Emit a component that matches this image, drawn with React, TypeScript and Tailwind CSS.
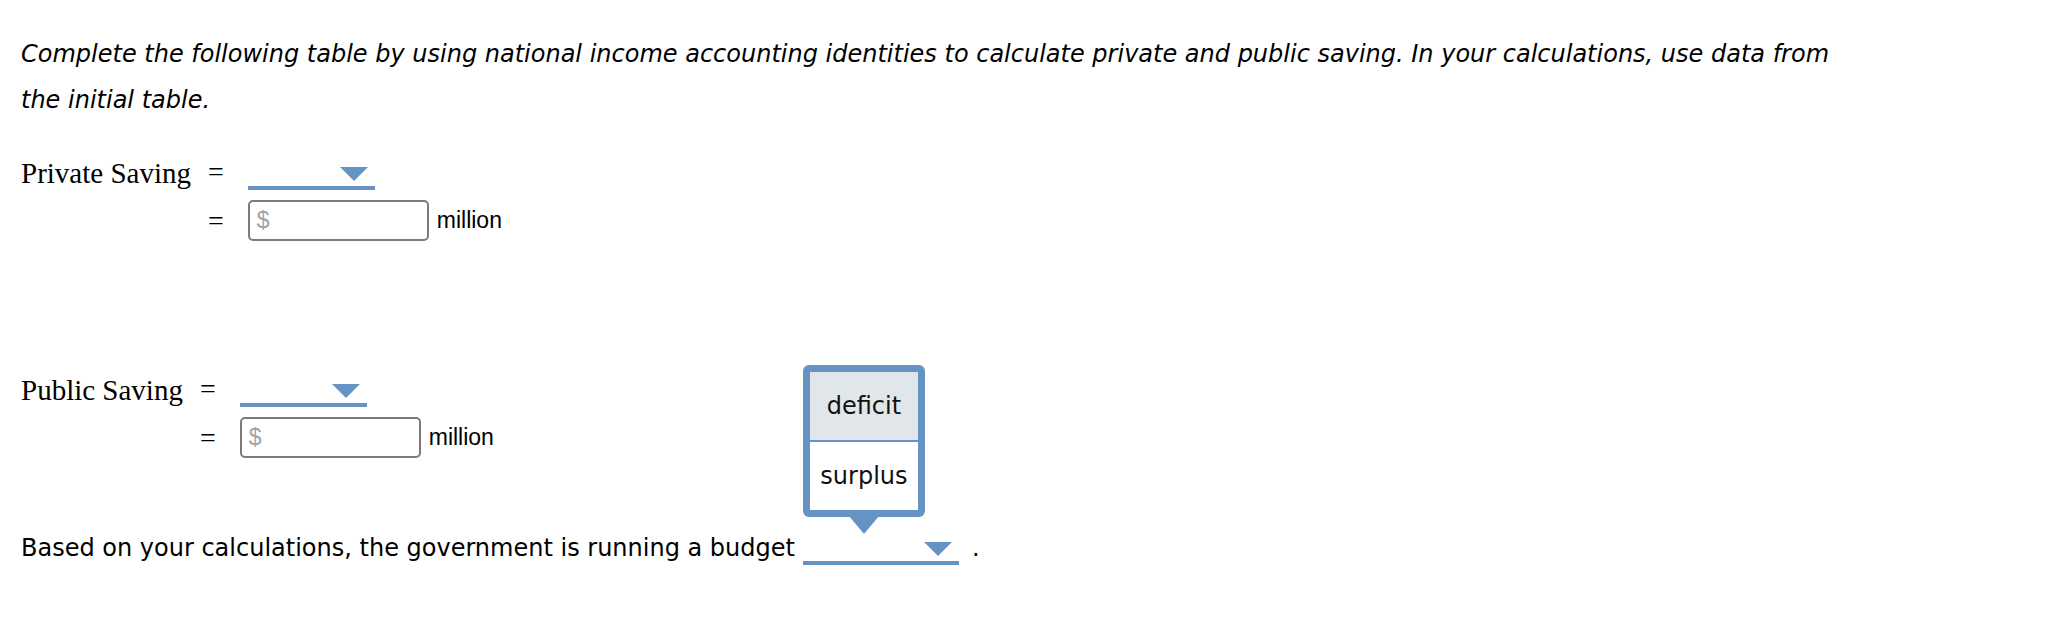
const BLUE = '#6593c4';

function Caret() {
  return (
    <svg width="28" height="14" viewBox="0 0 28 14" className="block">
      <path d="M0 0H28L14 14Z" fill={BLUE} />
    </svg>
  );
}

function Dropdown({ className }: { className: string }) {
  return (
    <div className={`flex items-end justify-end border-b-4 border-[#6593c4] pr-[7px] pb-[5px] ${className}`}>
      <Caret />
    </div>
  );
}

function MoneyInput() {
  return (
    <div className="flex items-center">
      <div className="flex h-[41px] w-[181px] items-center rounded-[5px] border-2 border-[#7b7b7b] bg-white pl-[7px]">
        <span className="font-['Liberation_Sans',Arial,sans-serif] text-[23px] leading-none text-[#a3a3a3]">$</span>
      </div>
      <span className="ml-[8px] font-['Liberation_Sans',Arial,sans-serif] text-[23px] leading-none text-black">million</span>
    </div>
  );
}

function SavingBlock({ label, className }: { label: string; className: string }) {
  return (
    <div className={`grid grid-cols-[auto_auto_auto] justify-start gap-y-[7px] ${className}`}>
      {/* row 1 */}
      <div className="self-start whitespace-nowrap font-['Liberation_Serif','Times_New_Roman',serif] text-[29px] leading-[40px]">
        {label}
      </div>
      <div className="self-start pl-[17px] pr-[24px] font-['Liberation_Serif','Times_New_Roman',serif] text-[28px] leading-[38px]">
        =
      </div>
      <Dropdown className="h-[37px] w-[127px] self-start" />

      {/* row 2 */}
      <div />
      <div className="self-center pl-[17px] pr-[24px] font-['Liberation_Serif','Times_New_Roman',serif] text-[28px] leading-[41px]">
        =
      </div>
      <div className="self-center">
        <MoneyInput />
      </div>
    </div>
  );
}

function BudgetMenu() {
  return (
    <div className="absolute bottom-[48px] left-0 w-[122px]">
      <div className="overflow-hidden rounded-[6px] border-[7px] border-[#6593c4] bg-white font-['DejaVu_Sans',Verdana,sans-serif] text-[24px] text-[#111]">
        <div className="flex h-[68px] items-center justify-center bg-[#e0e6ea]">deficit</div>
        <div className="h-[2px] bg-[#6593c4]" />
        <div className="flex h-[68px] items-center justify-center">surplus</div>
      </div>
      <svg width="30" height="18" viewBox="0 0 30 18" className="absolute left-1/2 top-full -mt-[1px] -translate-x-1/2">
        <path d="M0 0H30L15 18Z" fill={BLUE} />
      </svg>
    </div>
  );
}

export default function App() {
  return (
    <div className="min-h-[620px] bg-white pl-[21px] pt-[31px] text-black">
      <p className="whitespace-nowrap font-['DejaVu_Sans',Verdana,sans-serif] text-[24px] italic leading-[46px]">
        Complete the following table by using national income accounting identities to calculate private and public
        saving. In your calculations, use data from
        <br />
        the initial table.
      </p>

      <SavingBlock label="Private Saving" className="mt-[30px]" />
      <SavingBlock label="Public Saving" className="mt-[129px]" />

      <div className="mt-[72px] flex items-start font-['DejaVu_Sans',Verdana,sans-serif] text-[24px] leading-[30px]">
        <span className="whitespace-nowrap pt-[3px]">Based on your calculations, the government is running a budget</span>
        <div className="relative ml-[8px]">
          <BudgetMenu />
          <Dropdown className="h-[35px] w-[156px]" />
        </div>
        <span className="ml-[13px] pt-[3px]">.</span>
      </div>
    </div>
  );
}
